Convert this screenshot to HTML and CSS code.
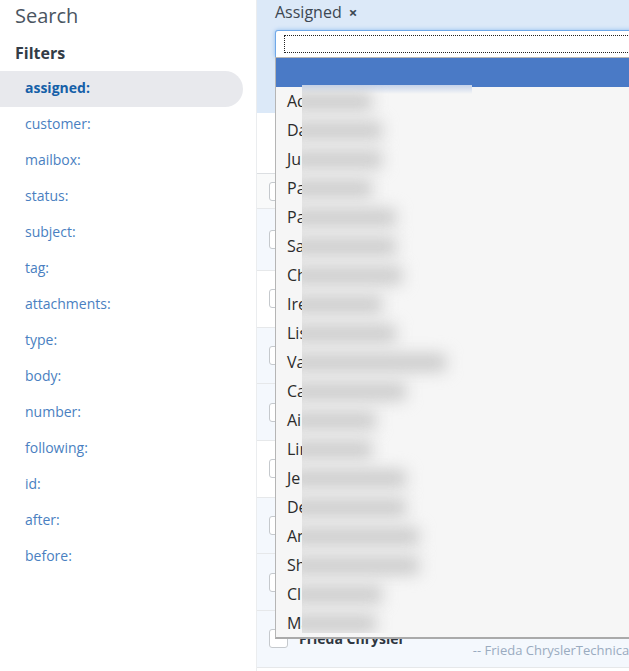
FILE: index.html
```html
<!DOCTYPE html>
<html lang="en">
<head>
    <meta charset="UTF-8">
    <meta name="viewport" content="width=device-width, initial-scale=1.0">
    <title>Search</title>
    <link rel="stylesheet" href="styles.css">
</head>
<body>

    <aside class="sidebar">
        <h1>Search</h1>
        <h2>Filters</h2>
        <ul class="filters">
            <li class="active"><a>assigned:</a></li>
            <li><a>customer:</a></li>
            <li><a>mailbox:</a></li>
            <li><a>status:</a></li>
            <li><a>subject:</a></li>
            <li><a>tag:</a></li>
            <li><a>attachments:</a></li>
            <li><a>type:</a></li>
            <li><a>body:</a></li>
            <li><a>number:</a></li>
            <li><a>following:</a></li>
            <li><a>id:</a></li>
            <li><a>after:</a></li>
            <li><a>before:</a></li>
        </ul>
    </aside>

    <main class="content">
        <div class="filter-bar">
            <div class="filter-label">Assigned <span class="remove">×</span></div>
        </div>

        <div class="rows">
            <div class="row row-head"></div>
            <div class="row row-short"><span class="check"></span></div>
            <div class="row row-tall unread"><span class="check"></span></div>
            <div class="row"><span class="check"></span></div>
            <div class="row unread"><span class="check"></span></div>
            <div class="row unread"><span class="check"></span></div>
            <div class="row"><span class="check"></span></div>
            <div class="row unread"><span class="check"></span></div>
            <div class="row unread"><span class="check"></span></div>
            <div class="row unread">
                <span class="check"></span>
                <span class="name">Frieda Chrysler</span>
                <span class="preview">-- Frieda ChryslerTechnica</span>
            </div>
        </div>

        <!-- Dropdown lies over the filter bar and the rows -->
        <div class="select">
            <div class="select-input"><span class="dotted"></span></div>
            <div class="select-list">
                <div class="selected"></div>
                <div class="option">Ad</div>
                <div class="option">Da</div>
                <div class="option">Ju</div>
                <div class="option">Pa</div>
                <div class="option">Pa</div>
                <div class="option">Sa</div>
                <div class="option">Ch</div>
                <div class="option">Ire</div>
                <div class="option">Lis</div>
                <div class="option">Va</div>
                <div class="option">Ca</div>
                <div class="option">Ai</div>
                <div class="option">Lin</div>
                <div class="option">Je</div>
                <div class="option">De</div>
                <div class="option">An</div>
                <div class="option">Sh</div>
                <div class="option">Cl</div>
                <div class="option">Ma</div>

                <!-- Names are blurred out in the original -->
                <div class="blur-panel">
                    <span class="smudge" style="width: 82px"></span>
                    <span class="smudge" style="width: 92px"></span>
                    <span class="smudge" style="width: 92px"></span>
                    <span class="smudge" style="width: 82px"></span>
                    <span class="smudge" style="width: 106px"></span>
                    <span class="smudge" style="width: 106px"></span>
                    <span class="smudge" style="width: 112px"></span>
                    <span class="smudge" style="width: 92px"></span>
                    <span class="smudge" style="width: 106px"></span>
                    <span class="smudge" style="width: 156px"></span>
                    <span class="smudge" style="width: 116px"></span>
                    <span class="smudge" style="width: 86px"></span>
                    <span class="smudge" style="width: 82px"></span>
                    <span class="smudge" style="width: 116px"></span>
                    <span class="smudge" style="width: 116px"></span>
                    <span class="smudge" style="width: 129px"></span>
                    <span class="smudge" style="width: 129px"></span>
                    <span class="smudge" style="width: 92px"></span>
                    <span class="smudge" style="width: 86px"></span>
                </div>
            </div>
        </div>
    </main>

</body>
</html>
```

FILE: styles.css
```css
html, body {
    height: 100%;
}

body {
    margin: 0;
    display: flex;
    height: 671px;
    overflow: hidden;
    font-family: "Open Sans", sans-serif;
    color: #333;
    background: #fff;
}

.sidebar {
    width: 256px;
    flex: none;
    box-sizing: border-box;
    padding-right: 13px;
}

.sidebar h1 {
    margin: 0;
    padding: 2px 0 0 15px;
    height: 30px;
    font-size: 20px;
    line-height: 28px;
    font-weight: 400;
    color: #4a5561;
}

.sidebar h2 {
    margin: 0;
    padding: 7px 0 0 15px;
    height: 32px;
    font-size: 16px;
    line-height: 28px;
    font-weight: 700;
    color: #333c47;
}

.filters {
    list-style: none;
    margin: 0;
    padding: 0;
}

.filters li {
    height: 36px;
    padding-left: 25px;
    font-size: 14px;
    line-height: 33px;
    color: #4a7fc1;
}

.filters li.active {
    font-weight: 700;
    color: #1560a8;
    background: #e8e9ed;
    border-radius: 0 18px 18px 0;
}

.content {
    position: relative;
    flex: 1;
    min-width: 0;
    overflow: hidden;
    border-left: 1px solid #ebedef;
}

.filter-bar {
    height: 113px;
    box-sizing: border-box;
    padding: 0 0 0 18px;
    background: #dce9f8;
}

.filter-label {
    font-size: 16px;
    line-height: 24px;
    color: #3d4752;
}

.remove {
    margin-left: 3px;
    font-weight: 700;
    font-size: 15px;
}

.rows {
    display: flex;
    flex-direction: column;
}

.row {
    height: 56.67px;
    flex: none;
    box-sizing: border-box;
    display: flex;
    align-items: center;
    padding-left: 12px;
    background: #fff;
    border-bottom: 1px solid #e6e8ea;
}

.row-head {
    height: 61px;
    border-bottom-color: #dcdfe2;
}

.row-short {
    height: 35px;
    background: #f9fafa;
}

.row-tall {
    height: 62px;
}

.unread {
    background: #f4f8fd;
}

.check {
    width: 19px;
    height: 19px;
    flex: none;
    box-sizing: border-box;
    background: #fff;
    border: 1px solid #c5c9cd;
    border-radius: 3px;
}

.name {
    margin-left: 11px;
    margin-top: 18px;
    align-self: flex-start;
    font-size: 14px;
    font-weight: 700;
    color: #2e3640;
    white-space: nowrap;
}

.preview {
    margin-left: 68px;
    margin-top: 30px;
    align-self: flex-start;
    font-size: 13px;
    color: #9aabc0;
    white-space: nowrap;
}

.select {
    position: absolute;
    top: 30px;
    left: 18px;
    width: 400px;
}

.select-input {
    height: 27px;
    box-sizing: border-box;
    padding: 4px 8px;
    background: #fff;
    border: 1px solid #6fa8e8;
    border-bottom: none;
    border-radius: 3px 0 0 0;
    box-shadow: 0 0 4px rgba(90, 160, 235, 0.6);
}

.dotted {
    display: block;
    height: 18px;
    box-sizing: border-box;
    border: 1px dotted #222;
}

.select-list {
    position: relative;
    height: 582px;
    box-sizing: border-box;
    background: #f6f6f6;
    border: 1px solid #b5b5b5;
    border-bottom: 2px solid #aaa;
}

.selected {
    height: 29px;
    background: #4a7ac6;
}

.option {
    height: 29px;
    padding-left: 11px;
    font-size: 16px;
    line-height: 29px;
    color: #2c2c2c;
}

.blur-panel {
    position: absolute;
    top: 27px;
    left: 26px;
    width: 170px;
    height: 548px;
    padding-top: 2px;
    box-sizing: border-box;
    display: flex;
    flex-direction: column;
    overflow: hidden;
    background: linear-gradient(#c4d2ea, #f6f6f6 9px);
}

.smudge {
    display: block;
    height: 17px;
    margin: 6px 0 6px -12px;
    flex: none;
    background: #c8c8c8;
    filter: blur(8px);
}
```
